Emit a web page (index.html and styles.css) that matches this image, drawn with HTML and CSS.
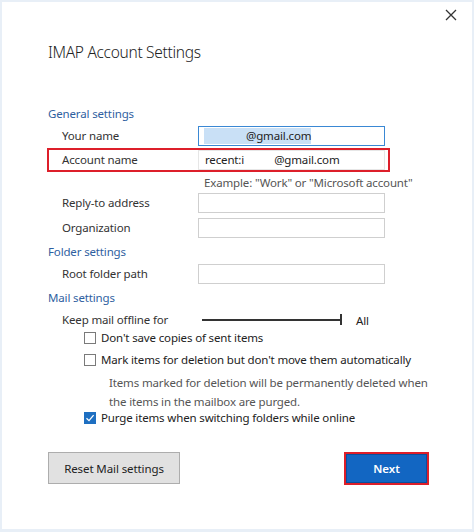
FILE: index.html
```html
<!DOCTYPE html>
<html lang="en">
<head>
    <meta charset="UTF-8">
    <meta name="viewport" content="width=device-width, initial-scale=1.0">
    <title>IMAP Account Settings</title>
    <link rel="stylesheet" href="styles.css">
</head>
<body>
    <div class="window">
        <div class="titlebar">
            <button class="close-button" aria-label="Close">
                <svg width="12" height="12" viewBox="0 0 12 12">
                    <path d="M1 1 L11 11 M11 1 L1 11" stroke="#333" stroke-width="1.3" fill="none"/>
                </svg>
            </button>
        </div>
        <h1 class="dialog-title">IMAP Account Settings</h1>

        <h2 class="group-title first">General settings</h2>
        <div class="field-row tight">
            <label>Your name</label>
            <div class="text-box focused"><span class="selected"><span class="hidden-part"></span>@gmail.com</span></div>
        </div>
        <div class="field-row highlight">
            <label>Account name</label>
            <div class="text-box">recent:i<span class="gap"></span>@gmail.com</div>
        </div>
        <div class="field-row hint-row">
            <span></span>
            <p class="hint">Example: "Work" or "Microsoft account"</p>
        </div>
        <div class="field-row">
            <label>Reply-to address</label>
            <div class="text-box"></div>
        </div>
        <div class="field-row">
            <label>Organization</label>
            <div class="text-box"></div>
        </div>

        <h2 class="group-title">Folder settings</h2>
        <div class="field-row">
            <label>Root folder path</label>
            <div class="text-box"></div>
        </div>

        <h2 class="group-title">Mail settings</h2>
        <div class="field-row slider-row">
            <label>Keep mail offline for</label>
            <div class="slider">
                <div class="slider-track"><span class="slider-thumb"></span></div>
                <span class="slider-value">All</span>
            </div>
        </div>

        <div class="options">
            <label class="check"><span class="box"></span>Don't save copies of sent items</label>
            <label class="check"><span class="box"></span>Mark items for deletion but don't move them automatically</label>
            <p class="note">Items marked for deletion will be permanently deleted when the items in the mailbox are purged.</p>
            <label class="check last"><span class="box checked">
                <svg width="10" height="10" viewBox="0 0 10 10">
                    <path d="M1.5 5.2 L4 7.6 L8.6 2.2" stroke="#fff" stroke-width="1.3" fill="none"/>
                </svg>
            </span>Purge items when switching folders while online</label>
        </div>

        <div class="buttons">
            <button class="reset-button">Reset Mail settings</button>
            <button class="next-button">Next</button>
        </div>
    </div>
</body>
</html>
```

FILE: styles.css
```css
body {
    margin: 0;
    padding: 2px 2px 3px 2px;
    background-color: #e8eff7;
    font-family: "Noto Sans", "Open Sans", Arial, sans-serif;
    font-size: 11.5px;
    letter-spacing: -0.15px;
    color: #333;
}
.window {
    background-color: #fff;
    height: 527px;
    box-sizing: border-box;
    padding-left: 46px;
}
.titlebar {
    display: flex;
    justify-content: flex-end;
    padding: 6px 14px 0 0;
    height: 23px;
    box-sizing: border-box;
}
.close-button {
    background: none;
    border: none;
    padding: 0;
    width: 14px;
    height: 14px;
    display: flex;
    align-items: center;
    justify-content: center;
}
.dialog-title {
    font-size: 15.5px;
    font-weight: 300;
    letter-spacing: -0.3px;
    color: #222;
    margin: 15px 0 0 0;
    line-height: 24px;
}
.group-title {
    font-size: 11.5px;
    font-weight: normal;
    color: #2f5f9f;
    margin: 0;
    line-height: 18px;
    height: 18px;
}
.group-title.first {
    margin-top: 41px;
}
.group-title + .field-row {
    margin-top: 3px;
}
.field-row {
    display: grid;
    grid-template-columns: 136px 187px;
    align-items: center;
    margin-left: 14px;
    height: 20px;
    margin-bottom: 5px;
}
.field-row.tight {
    margin-bottom: 2px;
}
.field-row label {
    line-height: 20px;
}
.text-box {
    height: 20px;
    box-sizing: border-box;
    border: 1px solid #cfcfcf;
    padding: 0 6px;
    line-height: 18px;
    color: #222;
    white-space: nowrap;
    overflow: hidden;
}
.text-box.focused {
    border-color: #3a88d4;
    padding-left: 5px;
}
.selected {
    background-color: #c9e0f6;
    display: inline-block;
    line-height: 16px;
}
.hidden-part {
    display: inline-block;
    width: 42px;
}
.gap {
    display: inline-block;
    width: 30px;
}
.field-row.highlight {
    box-sizing: border-box;
    height: 24px;
    width: 343px;
    border: 2px solid #dd1f2a;
    margin: 0 0 0 -1px;
    padding-left: 13px;
}
.field-row.highlight .text-box {
    border-color: #e6e6e6;
}
.hint-row {
    height: 21px;
    margin-bottom: 0;
}
.hint {
    margin: 0 0 0 6px;
    color: #555;
    white-space: nowrap;
}
.slider-row {
    height: 16px;
    margin-top: 3px;
    margin-bottom: 0;
}
.slider {
    display: flex;
    align-items: center;
    padding-left: 4px;
}
.slider-track {
    width: 140px;
    height: 2px;
    margin-top: -1px;
    background-color: #333;
    position: relative;
}
.slider-thumb {
    position: absolute;
    right: 0;
    top: -5px;
    width: 2px;
    height: 11px;
    background-color: #333;
}
.slider-value {
    margin-left: 14px;
    color: #222;
}
.options {
    padding-left: 36px;
    margin-top: 1px;
    display: flex;
    flex-direction: column;
}
.check {
    display: flex;
    align-items: center;
    line-height: 22px;
    color: #222;
}
.check.last {
    line-height: 14px;
}
.box {
    width: 12px;
    height: 12px;
    box-sizing: border-box;
    border: 1px solid #7a7a7a;
    background-color: #fff;
    margin-right: 5px;
    display: flex;
    align-items: center;
    justify-content: center;
}
.box.checked {
    background-color: #1e6fc1;
    border-color: #1e6fc1;
}
.note {
    margin: 2px 0 0 25px;
    width: 325px;
    line-height: 19px;
    color: #555;
}
.buttons {
    display: flex;
    justify-content: space-between;
    width: 381px;
    margin-top: 27px;
}
.reset-button {
    font-family: inherit;
    font-size: 11.5px;
    letter-spacing: -0.1px;
    color: #222;
    background-color: #e1e1e1;
    border: 1px solid #adadad;
    width: 132px;
    height: 32px;
}
.next-button {
    font-family: inherit;
    font-size: 11.5px;
    font-weight: 600;
    color: #fff;
    background-color: #1266c2;
    border: 2px solid #dd1f2a;
    box-shadow: inset 0 0 0 1px #0b4f9c;
    width: 85px;
    height: 33px;
}
```
